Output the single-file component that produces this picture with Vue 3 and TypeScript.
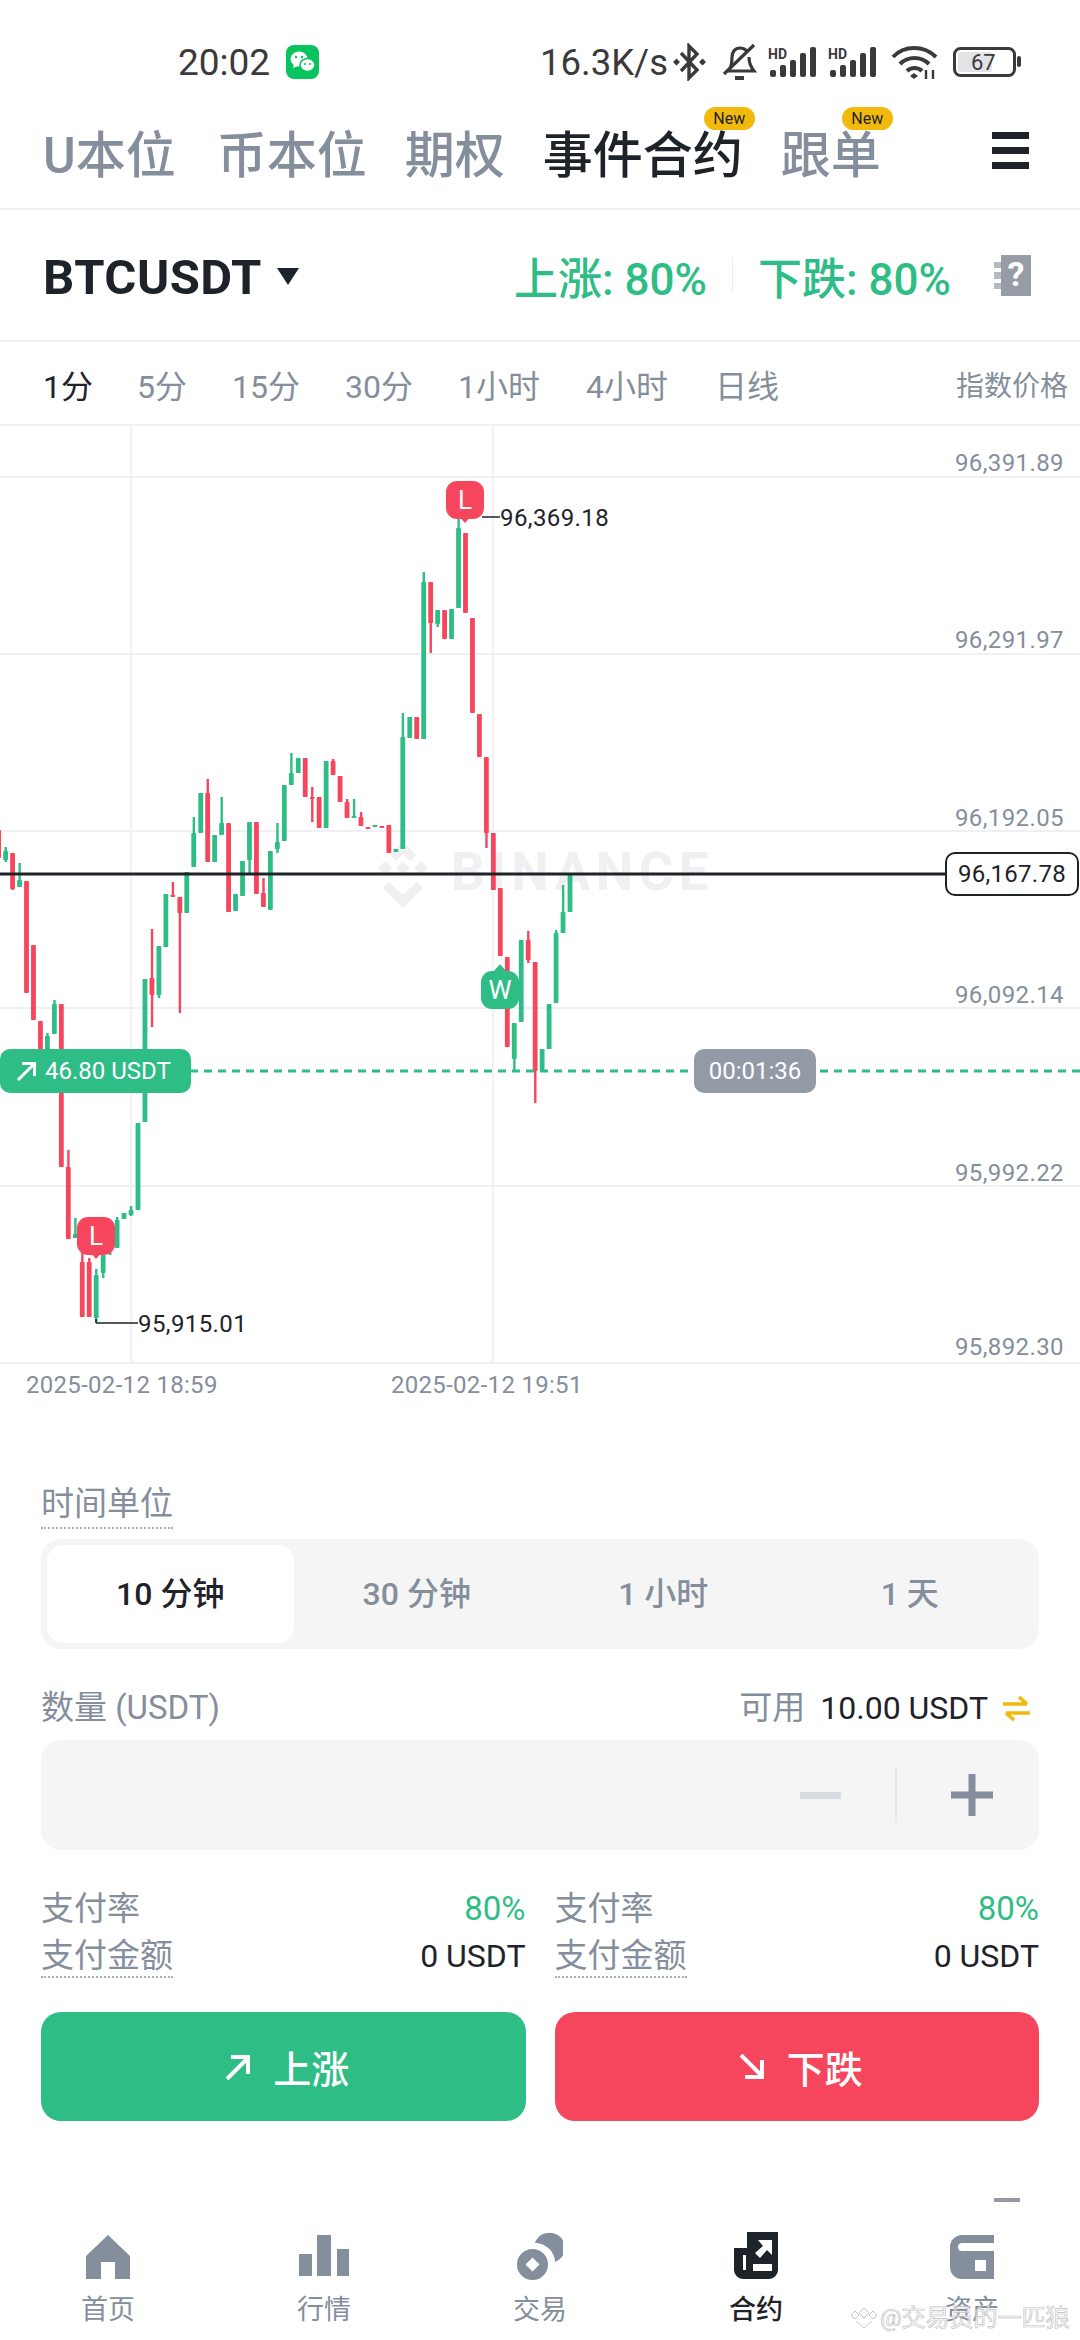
<template>
  <div class="page">
    <div class="status">
      <span class="time">20:02</span>
      <svg class="wechat" width="33" height="34" viewBox="0 0 33 34">
        <rect width="33" height="34" rx="8" fill="#08c35e" />
        <ellipse cx="13" cy="14" rx="8.5" ry="7.5" fill="#fff" />
        <path d="M8 19l-1 4 5-2z" fill="#fff" />
        <ellipse cx="21.5" cy="20" rx="7.5" ry="6.5" fill="#fff" stroke="#08c35e" stroke-width="1.5" />
        <circle cx="10" cy="12" r="1.2" fill="#08c35e" />
        <circle cx="16" cy="12" r="1.2" fill="#08c35e" />
        <circle cx="19" cy="19" r="1" fill="#08c35e" />
        <circle cx="24" cy="19" r="1" fill="#08c35e" />
      </svg>
      <span class="speed">16.3K/s</span>
      <svg class="bt" width="35" height="38" viewBox="0 0 35 38" fill="none" stroke="#3a3a3a" stroke-width="3.4">
        <path d="M9 10l16 17-8 8V3l8 8L9 28" />
        <path d="M1 19l3.5-3.5L8 19l-3.5 3.5zM27 19l3.5-3.5L34 19l-3.5 3.5z" fill="#3a3a3a" stroke="none" />
      </svg>
      <svg class="bell" width="35" height="38" viewBox="0 0 35 38" fill="none" stroke="#3a3a3a" stroke-width="3.2">
        <path d="M8 25c2-3 2-7 2-11 0-5 3-9 8-9 3 0 5 1 7 3M27 14c0 5 1 9 5 14H6" />
        <path d="M2 31L32 2" />
        <path d="M13 35h9" stroke-width="4" />
      </svg>
      <svg class="sig" width="50" height="32" viewBox="0 0 50 32">
        <text x="0" y="13" class="hd">HD</text>
        <rect x="2" y="24" width="6" height="7" rx="2" />
        <rect x="12" y="19" width="6" height="12" rx="2" />
        <rect x="22" y="14" width="6" height="17" rx="2" />
        <rect x="32" y="7" width="6" height="24" rx="2" />
        <rect x="42" y="1" width="6" height="30" rx="2" />
      </svg>
      <svg class="sig sig2" width="50" height="32" viewBox="0 0 50 32">
        <text x="0" y="13" class="hd">HD</text>
        <rect x="2" y="24" width="6" height="7" rx="2" />
        <rect x="12" y="19" width="6" height="12" rx="2" />
        <rect x="22" y="14" width="6" height="17" rx="2" />
        <rect x="32" y="7" width="6" height="24" rx="2" />
        <rect x="42" y="1" width="6" height="30" rx="2" />
      </svg>
      <svg class="wifi" width="47" height="36" viewBox="0 0 47 36" fill="none" stroke="#3a3a3a" stroke-width="4">
        <path d="M2 13C13 1 33 1 45 13" />
        <path d="M9 20c8-8 21-8 29 0" />
        <path d="M16 27c4-4 11-4 15 0" />
        <path d="M19 32l4-3 4 3-4 3z" fill="#3a3a3a" stroke="none" />
        <path d="M35 26v9M42 26v9" stroke-width="2.4" />
      </svg>
      <svg class="battery" width="68" height="30" viewBox="0 0 68 30">
        <rect x="5" y="5" width="34" height="20" rx="2" fill="#e2e3e6" />
        <rect x="1.5" y="1.5" width="60" height="27" rx="6" fill="none" stroke="#3a3a3a" stroke-width="3" />
        <rect x="64" y="9" width="4" height="11" rx="2" fill="#3a3a3a" />
        <text x="18" y="23" class="batt">67</text>
      </svg>
    </div>

    <div class="tabs">
      <div v-for="tab in tabs" :key="tab.name" class="tab" :class="{ active: tab.active }">
        {{ tab.name }}
        <span v-if="tab.badge" class="badge">New</span>
      </div>
      <div class="burger"><i></i><i></i><i></i></div>
    </div>

    <div class="symbol">
      <span class="pair">BTCUSDT</span>
      <span class="caret"></span>
      <span class="rate up">上涨: 80%</span>
      <span class="rate-sep"></span>
      <span class="rate">下跌: 80%</span>
      <svg class="help" width="37" height="41" viewBox="0 0 37 41">
        <rect x="7" width="30" height="41" fill="#979ca6" />
        <rect y="7" width="7" height="6" fill="#b5b9c0" />
        <rect y="17" width="7" height="7" fill="#b5b9c0" />
        <rect y="28" width="7" height="6" fill="#b5b9c0" />
        <text x="22" y="31" class="help-q">?</text>
      </svg>
    </div>

    <div class="intervals">
      <span v-for="(it, idx) in intervals" :key="it.label" class="interval" :class="{ active: idx === 0 }" :style="{ width: it.w + 'px' }">{{ it.label }}</span>
      <span class="index-price">指数价格</span>
    </div>

    <div class="chart">
      <svg class="plot" width="1080" height="974" viewBox="0 426 1080 974">
        <line v-for="y in gridY" :key="y" x1="0" x2="1080" :y1="y" :y2="y" stroke="#eef0f3" stroke-width="2" />
        <line x1="131" x2="131" y1="426" y2="1363" stroke="#f0f1f4" stroke-width="2" />
        <line x1="493" x2="493" y1="426" y2="1363" stroke="#f0f1f4" stroke-width="2" />

        <g fill="#eff0f1">
          <path d="M403 842l13 13-6 6-7-7-7 7-6-6zM378 868l7-7 7 7-7 7zM428 868l-7-7-7 7 7 7zM403 861l7 7-7 7-7-7zM389 882l14 13 14-13 6 6-20 20-20-20z" />
        </g>
        <text x="451" y="890" class="wm">BINANCE</text>

        <g v-for="c in candles" :key="c.x" :fill="c.fill">
          <rect :x="c.x - 1" :y="c.wt" width="2.4" :height="c.wb - c.wt" />
          <rect :x="c.x - 2.3" :y="c.bt" width="4.8" :height="Math.max(c.bb - c.bt, 2)" rx="0.8" />
        </g>

        <line x1="0" x2="945" y1="874" y2="874" stroke="#1e2329" stroke-width="3" />
        <line x1="190" x2="1080" y1="1071" y2="1071" stroke="#2ebd85" stroke-width="3" stroke-dasharray="8 6" />

        <text v-for="p in prices" :key="p.t" x="1064" :y="p.y" class="axis">{{ p.t }}</text>

        <path d="M482 517h18M96 1323h42M96 1319v4" stroke="#1e2329" stroke-width="1.6" fill="none" />
        <text x="500" y="526" class="mark">96,369.18</text>
        <text x="138" y="1332" class="mark">95,915.01</text>
      </svg>

      <div class="pin pin-top">L</div>
      <div class="pin pin-low">L</div>
      <div class="pin pin-win">W</div>

      <div class="last">96,167.78</div>
      <div class="profit">
        <svg width="20" height="20" viewBox="0 0 20 20" fill="none" stroke="#fff" stroke-width="3">
          <path d="M2 19L17 4M6 2.500h12.500V15" />
        </svg>
        46.80 USDT
      </div>
      <div class="countdown">00:01:36</div>

      <div class="stamps">
        <span class="stamp">2025-02-12 18:59</span>
        <span class="stamp">2025-02-12 19:51</span>
      </div>
    </div>

    <div class="form">
      <span class="hint">时间单位</span>
      <div class="segment">
        <div v-for="(s, idx) in durations" :key="s" class="seg" :class="{ on: idx === 0 }">{{ s }}</div>
      </div>

      <div class="qty">
        <span class="muted">数量 (USDT)</span>
        <span class="avail">
          <span class="muted">可用</span>
          <span class="dark">10.00 USDT</span>
          <svg width="27" height="25" viewBox="0 0 27 25" fill="none" stroke="#f0b90b" stroke-width="3.6">
            <path d="M0 8h24M16 1l8 7M27 17H3M11 24l-8-7" />
          </svg>
        </span>
      </div>
      <div class="input">
        <i class="minus"></i>
        <i class="input-sep"></i>
        <svg class="plus" width="42" height="42" viewBox="0 0 42 42" fill="#848e9c">
          <rect x="17.500" width="7" height="42" />
          <rect y="17.500" width="42" height="7" />
        </svg>
      </div>

      <div class="pay">
        <div v-for="n in 2" :key="n" class="pay-col">
          <div class="pay-row">
            <span class="muted">支付率</span>
            <span class="green">80%</span>
          </div>
          <div class="pay-row">
            <span class="muted under">支付金额</span>
            <span class="dark">0 USDT</span>
          </div>
        </div>
      </div>

      <div class="actions">
        <button class="btn long">
          <svg width="26" height="26" viewBox="0 0 26 26" fill="none" stroke="#fff" stroke-width="4">
            <path d="M2 25L22 5M6 3h17v17" />
          </svg>
          上涨
        </button>
        <button class="btn short">
          <svg width="26" height="26" viewBox="0 0 26 26" fill="none" stroke="#fff" stroke-width="4">
            <path d="M2 1l20 20M23 6v17H6" />
          </svg>
          下跌
        </button>
      </div>
    </div>

    <div class="nav">
      <i class="peek"></i>
      <div class="nav-item">
        <svg width="44" height="50" viewBox="0 0 44 50" fill="#848e9c">
          <path d="M22 3l22 21v23H29V30H15v17H0V24z" />
        </svg>
        <span>首页</span>
      </div>
      <div class="nav-item">
        <svg width="50" height="50" viewBox="0 0 50 50" fill="#848e9c">
          <rect y="22" width="13" height="22" />
          <rect x="18" y="3" width="14" height="41" />
          <rect x="38" y="17" width="12" height="27" />
        </svg>
        <span>行情</span>
      </div>
      <div class="nav-item">
        <svg width="46" height="50" viewBox="0 0 46 50" fill="#848e9c">
          <path d="M31 1a15 15 0 0 1 7 29c0-10-9-19-20-19 2-6 7-10 13-10z" />
          <path d="M15.500 17a15.500 15.500 0 1 1 0 31 15.500 15.500 0 0 1 0-31z" />
          <path d="M15.500 25.500l7 7-7 7-7-7z" fill="#fff" />
        </svg>
        <span>交易</span>
      </div>
      <div class="nav-item on">
        <svg width="44" height="50" viewBox="0 0 44 50">
          <path d="M13 0h31v38a9 9 0 0 1-9 9H9a9 9 0 0 1-9-9V16h13z" fill="#1e2329" />
          <path d="M9 23h3v15H9z" fill="#fff" />
          <path d="M19 32h19v7H19zM24 8h14v15l-5-5-7 8-5-5 8-7z" fill="#fff" />
        </svg>
        <span>合约</span>
      </div>
      <div class="nav-item">
        <svg width="44" height="50" viewBox="0 0 44 50" fill="#848e9c">
          <path d="M12 3h32v44H12A12 12 0 0 1 0 35V15A12 12 0 0 1 12 3z" />
          <path d="M12 11h32v8H12a4 4 0 0 1 0-8z" fill="#fff" />
          <rect x="25" y="28" width="11" height="11" fill="#fff" />
        </svg>
        <span>资产</span>
      </div>
      <div class="stampmark">
        <svg width="28" height="22" viewBox="0 0 28 22" fill="none" stroke="#c4c4c4" stroke-width="1">
          <path d="M14 1l5 5-5 5-5-5zM1 8l4-4 4 4-4 4zM27 8l-4-4-4 4 4 4zM6 14l8 7 8-7" />
        </svg>
        @交易员的一匹狼
      </div>
    </div>
  </div>
</template>

<script setup lang="ts">
type Raw = [string, number, number, number, number]

const tabs = [
  { name: 'U本位' },
  { name: '币本位' },
  { name: '期权' },
  { name: '事件合约', active: true, badge: true },
  { name: '跟单', badge: true },
]

const intervals = [
  { label: '1分', w: 94 },
  { label: '5分', w: 95 },
  { label: '15分', w: 113 },
  { label: '30分', w: 113 },
  { label: '1小时', w: 128 },
  { label: '4小时', w: 129 },
  { label: '日线', w: 70 },
]

const durations = ['10 分钟', '30 分钟', '1 小时', '1 天']

const gridY = [477, 654, 831, 1008, 1186, 1363]

const prices = [
  { t: '96,391.89', y: 471 },
  { t: '96,291.97', y: 648 },
  { t: '96,192.05', y: 826 },
  { t: '96,092.14', y: 1003 },
  { t: '95,992.22', y: 1181 },
  { t: '95,892.30', y: 1355 },
]

// colour, wick top, body top, body bottom, wick bottom (page px)
const raw: Raw[] = [
  ['r', 830, 830, 858, 858], ['g', 847, 851, 860, 862], ['r', 853, 853, 889, 890], ['g', 863, 880, 887, 887],
  ['r', 881, 881, 993, 993], ['r', 945, 945, 1020, 1020], ['r', 1021, 1021, 1050, 1050], ['g', 1033, 1036, 1050, 1050],
  ['g', 1000, 1004, 1034, 1034], ['r', 1004, 1004, 1167, 1167], ['r', 1150, 1167, 1239, 1239], ['g', 1218, 1234, 1238, 1238],
  ['r', 1240, 1262, 1317, 1317], ['r', 1258, 1262, 1317, 1317], ['g', 1269, 1275, 1318, 1322], ['g', 1255, 1255, 1273, 1278],
  ['g', 1225, 1228, 1250, 1255], ['g', 1217, 1220, 1248, 1248], ['g', 1213, 1213, 1219, 1219], ['g', 1206, 1210, 1215, 1216],
  ['g', 1123, 1123, 1210, 1210], ['g', 979, 979, 1122, 1122], ['r', 929, 978, 995, 1027], ['g', 946, 946, 995, 998],
  ['g', 894, 894, 947, 947], ['r', 882, 895, 897, 897], ['r', 897, 897, 913, 1013], ['g', 872, 872, 913, 913],
  ['g', 817, 833, 867, 867], ['g', 793, 793, 833, 833], ['r', 779, 793, 862, 862], ['g', 835, 835, 862, 862],
  ['g', 797, 823, 835, 835], ['r', 823, 823, 912, 912], ['g', 894, 894, 911, 911], ['g', 861, 861, 896, 896],
  ['g', 822, 822, 860, 873], ['r', 822, 822, 894, 894], ['r', 878, 893, 907, 907], ['g', 851, 851, 910, 910],
  ['g', 823, 842, 849, 853], ['g', 785, 785, 841, 841], ['g', 753, 773, 785, 785], ['g', 758, 758, 773, 773],
  ['r', 758, 758, 797, 797], ['r', 787, 797, 799, 822], ['r', 797, 797, 828, 828], ['g', 761, 761, 828, 828],
  ['r', 759, 761, 775, 775], ['r', 776, 776, 802, 802], ['r', 799, 802, 818, 818], ['g', 799, 816, 818, 818],
  ['r', 812, 817, 826, 826], ['r', 827, 827, 829, 829], ['g', 825, 825, 827, 827], ['r', 826, 826, 827, 827],
  ['r', 825, 825, 853, 853], ['g', 849, 849, 852, 852], ['g', 713, 737, 849, 849], ['g', 717, 717, 738, 738],
  ['r', 717, 717, 739, 739], ['g', 572, 582, 739, 739], ['r', 582, 582, 623, 653], ['g', 610, 610, 624, 627],
  ['r', 610, 610, 639, 639], ['g', 609, 609, 639, 639], ['g', 519, 528, 608, 608], ['r', 533, 533, 613, 613],
  ['r', 618, 618, 713, 713], ['r', 714, 714, 757, 757], ['r', 757, 757, 833, 848], ['r', 833, 833, 890, 890],
  ['r', 888, 888, 956, 956], ['r', 957, 957, 1047, 1047], ['g', 1023, 1023, 1059, 1071], ['g', 940, 940, 1022, 1022],
  ['r', 931, 940, 960, 963], ['r', 962, 962, 1071, 1103], ['g', 1049, 1049, 1071, 1071], ['g', 1004, 1004, 1049, 1049],
  ['g', 930, 933, 1003, 1003], ['g', 885, 912, 933, 933], ['g', 875, 875, 912, 912],
]

const candles = raw.map(([c, wt, bt, bb, wb], i) => ({
  x: 5.5 + 6.968 * (i - 1),
  fill: c === 'g' ? '#2ebd85' : '#f6465d',
  wt,
  bt,
  bb,
  wb,
}))
</script>

<style scoped>
.page {
  position: relative;
  width: 1080px;
  height: 2340px;
  background: #fff;
  overflow: hidden;
  font-family: Roboto, "Noto Sans CJK SC", sans-serif;
  color: #1e2329;
}

.status {
  display: flex;
  align-items: center;
  height: 124px;
  padding-left: 178px;
  color: #3a3a3a;
}
.time {
  width: 108px;
  font-size: 37px;
}
.speed {
  margin-left: 221px;
  width: 132px;
  font-size: 36.500px;
}
.bell { margin-left: 15px; }
.sig { margin-left: 11px; fill: #3a3a3a; overflow: visible; }
.sig2 { margin-left: 10px; }
.wifi { margin-left: 13px; }
.battery { margin-left: 15px; }
.hd {
  font-size: 14px;
  font-weight: 700;
}
.batt {
  font-size: 22px;
  fill: #3a3a3a;
}

.tabs {
  position: relative;
  display: flex;
  gap: 38px;
  height: 86px;
  box-sizing: border-box;
  padding: 3px 0 25px 43px;
  border-bottom: 2px solid #eef0f2;
  font-size: 50px;
  line-height: 58px;
  font-weight: 500;
  color: #848e9c;
}
.tab {
  position: relative;
  white-space: nowrap;
}
.tab:first-child {
  margin-right: 3px;
}
.tab.active {
  color: #1e2329;
}
.badge {
  position: absolute;
  top: -20px;
  right: -12px;
  width: 51px;
  height: 23px;
  border-radius: 12px;
  background: #f0b90b;
  color: #1e2329;
  font: 400 16px/23px Roboto, sans-serif;
  text-align: center;
}
.burger {
  position: absolute;
  top: 8px;
  left: 992px;
  display: flex;
  flex-direction: column;
  gap: 8px;
}
.burger i {
  display: block;
  width: 37px;
  height: 7px;
  background: #1e2329;
}

.symbol {
  display: flex;
  align-items: center;
  height: 132px;
  box-sizing: border-box;
  padding-left: 43px;
  border-bottom: 2px solid #eef0f2;
}
.pair {
  width: 234px;
  margin-top: 5px;
  font-size: 49px;
  font-weight: 700;
  letter-spacing: 0.5px;
}
.caret {
  width: 0;
  height: 0;
  margin-top: 2px;
  border-style: solid;
  border-width: 17px 11.500px 0;
  border-color: #1e2329 transparent transparent;
}
.rate {
  margin-top: 2px;
  font-size: 44px;
  font-weight: 500;
  color: #2ebd85;
  white-space: nowrap;
}
.rate.up {
  margin-left: 215px;
}
.rate-sep {
  width: 1px;
  height: 36px;
  margin: 0 25px;
  background: #eaecef;
}
.help {
  margin-left: 43px;
}
.help-q {
  font: 700 34px Roboto, sans-serif;
  fill: #fff;
  text-anchor: middle;
}

.intervals {
  position: relative;
  display: flex;
  align-items: center;
  height: 84px;
  box-sizing: border-box;
  padding: 2px 0 0 43px;
  border-bottom: 2px solid #eef0f2;
  font-size: 32px;
  color: #848e9c;
}
.interval {
  flex: none;
}
.interval.active {
  color: #1e2329;
}
.index-price {
  margin-left: 171px;
  font-size: 28px;
}

.chart {
  position: relative;
  height: 974px;
}
.plot {
  display: block;
}
.wm {
  font: 700 53px Roboto, sans-serif;
  letter-spacing: 5.500px;
  fill: #eff0f1;
}
.axis {
  font: 400 24px Roboto, sans-serif;
  fill: #848e9c;
  text-anchor: end;
  letter-spacing: 0.4px;
}
.mark {
  font: 400 24px Roboto, sans-serif;
  fill: #1e2329;
  letter-spacing: 0.4px;
}

.pin {
  position: absolute;
  width: 38px;
  height: 38px;
  border-radius: 11px;
  color: #fff;
  font-size: 26px;
  line-height: 38px;
  text-align: center;
  background: #f6465d;
}
.pin::after {
  content: "";
  position: absolute;
  left: 12px;
  top: 34px;
  border-style: solid;
  border-width: 8px 7px 0;
  border-color: #f6465d transparent transparent;
}
.pin-top {
  left: 446px;
  top: 55px;
}
.pin-low {
  left: 77px;
  top: 791px;
}
.pin-win {
  left: 481px;
  top: 545px;
  background: #2ebd85;
}
.pin-win::after {
  top: -7px;
  border-width: 0 7px 8px;
  border-color: transparent transparent #2ebd85;
}

.last {
  position: absolute;
  left: 945px;
  top: 426px;
  box-sizing: border-box;
  width: 134px;
  height: 44px;
  border: 2px solid #1e2329;
  border-radius: 10px;
  background: #fff;
  font-size: 24px;
  line-height: 40px;
  text-align: center;
  letter-spacing: 0.3px;
}
.profit {
  position: absolute;
  left: 0;
  top: 623px;
  display: flex;
  align-items: center;
  gap: 9px;
  box-sizing: border-box;
  width: 191px;
  height: 44px;
  padding-left: 16px;
  border-radius: 10px;
  background: #2ebd85;
  color: #fff;
  font-size: 24px;
}
.countdown {
  position: absolute;
  left: 694px;
  top: 623px;
  width: 122px;
  height: 44px;
  border-radius: 10px;
  background: #929aa5;
  color: #fff;
  font-size: 24px;
  line-height: 44px;
  text-align: center;
}
.stamps {
  position: absolute;
  left: 26px;
  top: 945px;
  display: flex;
  gap: 175px;
}
.stamp {
  width: 190px;
  font-size: 24px;
  line-height: 28px;
  color: #848e9c;
  white-space: nowrap;
  letter-spacing: 0.3px;
}

.form {
  padding: 84px 41px 0;
  font-size: 32px;
}
.hint,
.under {
  display: inline-block;
  border-bottom: 2px dotted #aab0ba;
  color: #848e9c;
}
.hint {
  height: 43px;
  font-size: 33px;
  line-height: 40px;
}
.muted {
  font-size: 33px;
  color: #848e9c;
}
.dark {
  color: #1e2329;
}
.green {
  font-size: 33px;
  color: #2ebd85;
}
.segment {
  display: flex;
  margin-top: 10px;
  height: 110px;
  box-sizing: border-box;
  padding: 6px;
  border-radius: 20px;
  background: #f5f5f5;
}
.seg {
  flex: 1;
  border-radius: 16px;
  text-align: center;
  line-height: 98px;
  font-weight: 500;
  color: #848e9c;
}
.seg.on {
  background: #fff;
  color: #1e2329;
}
.qty {
  display: flex;
  justify-content: space-between;
  margin-top: 39px;
  line-height: 40px;
}
.avail {
  display: flex;
  align-items: center;
  gap: 15px;
  margin-right: 9px;
}
.input {
  display: flex;
  align-items: center;
  justify-content: flex-end;
  height: 110px;
  margin-top: 12px;
  padding-right: 46px;
  border-radius: 20px;
  background: #f5f5f5;
}
.minus {
  width: 41px;
  height: 7px;
  background: #d8dce1;
}
.input-sep {
  width: 2px;
  height: 54px;
  margin: 0 54px;
  background: #e6e8ea;
}
.pay {
  display: grid;
  grid-template-columns: 1fr 1fr;
  gap: 29px;
  margin-top: 39px;
}
.pay-col {
  display: flex;
  flex-direction: column;
  gap: 7px;
}
.pay-row {
  display: flex;
  align-items: flex-start;
  justify-content: space-between;
  height: 40px;
  line-height: 40px;
}
.actions {
  display: grid;
  grid-template-columns: 1fr 1fr;
  gap: 29px;
  margin-top: 36px;
}
.btn {
  display: flex;
  align-items: center;
  justify-content: center;
  gap: 22px;
  height: 109px;
  padding: 0 0 0 8px;
  border: 0;
  border-radius: 20px;
  color: #fff;
  font-family: inherit;
  font-size: 38px;
  font-weight: 500;
}
.long {
  background: #2ebd85;
}
.short {
  background: #f6465d;
}

.nav {
  position: absolute;
  left: 0;
  right: 0;
  top: 2232px;
  display: grid;
  grid-template-columns: repeat(5, 1fr);
}
.peek {
  position: absolute;
  left: 994px;
  top: -34px;
  width: 26px;
  height: 4px;
  background: #929aa5;
}
.nav-item {
  display: flex;
  flex-direction: column;
  align-items: center;
  gap: 10px;
  font-size: 27px;
  line-height: 36px;
  color: #848e9c;
}
.nav-item.on {
  color: #1e2329;
  font-weight: 500;
}
.stampmark {
  position: absolute;
  left: 850px;
  top: 72px;
  display: flex;
  align-items: center;
  gap: 2px;
  font-size: 24px;
  line-height: 28px;
  white-space: nowrap;
  color: rgba(255, 255, 255, 0.55);
  -webkit-text-stroke: 0.7px #c2c2c2;
}
</style>

<style>
html,
body {
  margin: 0;
  background: #fff;
}
</style>
